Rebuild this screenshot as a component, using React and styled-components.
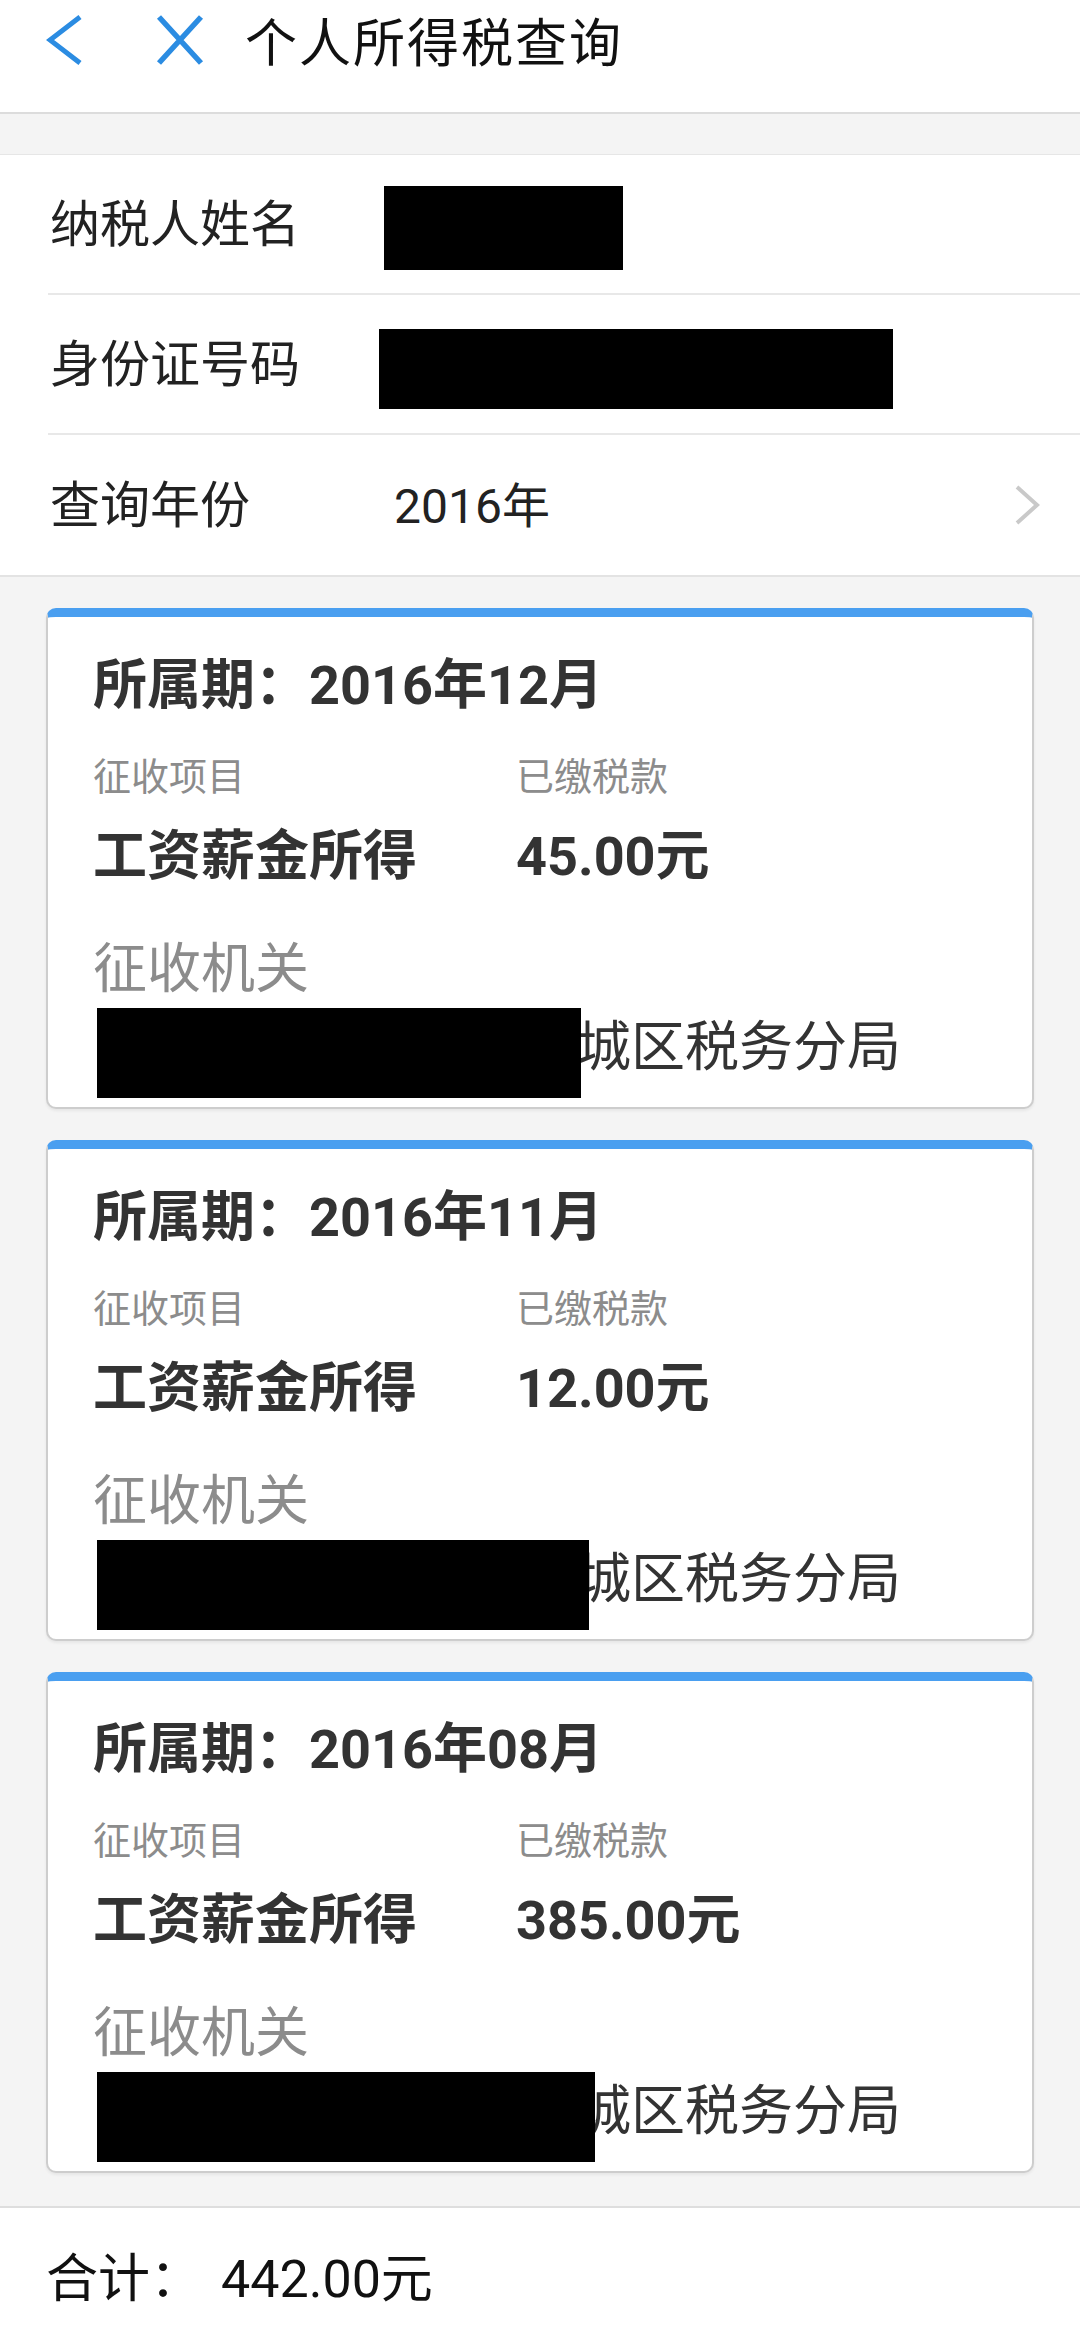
import React from 'react';
import styled, { createGlobalStyle } from 'styled-components';

const records = [
  { period: '2016年12月', item: '工资薪金所得', amount: '45.00元', extra: 0 },
  { period: '2016年11月', item: '工资薪金所得', amount: '12.00元', extra: 8 },
  { period: '2016年08月', item: '工资薪金所得', amount: '385.00元', extra: 14 },
];

const GlobalStyle = createGlobalStyle`
  html, body {
    margin: 0;
    padding: 0;
    background: #ffffff;
  }
  body {
    font-family: Roboto, "Noto Sans CJK SC", sans-serif;
    color: #222;
  }
  *, *::before, *::after {
    box-sizing: border-box;
  }
`;

const Page = styled.div`
  width: 1080px;
  min-height: 2350px;
  display: flex;
  flex-direction: column;
  background: #fff;
`;

const Header = styled.header`
  height: 114px;
  padding: 14px 0 0 46px;
  display: flex;
  align-items: flex-start;
  border-bottom: 2px solid #dcdcdc;
`;

const HeaderRow = styled.div`
  height: 52px;
  display: flex;
  align-items: center;
`;

const IconButton = styled.svg`
  display: block;
  margin-right: ${(p) => p.$gap}px;
  flex-shrink: 0;
`;

const Title = styled.h1`
  margin: 0;
  font-family: "Noto Sans CJK SC", sans-serif;
  font-weight: 400;
  font-size: 52px;
  line-height: 1;
  letter-spacing: 2px;
  color: #111;
`;

const Spacer = styled.div`
  height: 41px;
  background: #f4f4f4;
  border-bottom: 1px solid #e6e6e6;
`;

const Form = styled.section`
  border-bottom: 2px solid #e3e3e3;
`;

const Row = styled.div`
  height: 140px;
  margin-left: 48px;
  padding-right: 40px;
  display: flex;
  align-items: center;
  border-bottom: ${(p) => (p.$last ? 'none' : '2px solid #e8e8e8')};
`;

const Label = styled.span`
  width: 336px;
  flex-shrink: 0;
  font-family: "Noto Sans CJK SC", sans-serif;
  font-size: 50px;
  color: #222;
  padding-left: 2px;
  padding-bottom: 8px;
`;

const Value = styled.span`
  flex: 1;
  font-size: 48px;
  color: #222;
  padding-left: 10px;
  padding-bottom: 6px;
`;

const Redacted = styled.div`
  background: #000;
  width: ${(p) => p.$w}px;
  height: ${(p) => p.$h}px;
  margin-left: ${(p) => p.$ml || 0}px;
  margin-top: ${(p) => p.$mt || 0}px;
  margin-right: ${(p) => p.$mr || 0}px;
  flex-shrink: 0;
  position: relative;
  z-index: 1;
`;

const List = styled.section`
  background: #f4f4f4;
  padding: 31px 46px 33px;
  display: flex;
  flex-direction: column;
  gap: 31px;
  border-bottom: 2px solid #dedede;
`;

const Card = styled.article`
  background: #fff;
  border: 2px solid #cdcdcd;
  border-top: 9px solid #4a9ff0;
  border-radius: 10px;
  padding: 38px 44px 9px 45px;
  box-shadow: 0 2px 3px rgba(0, 0, 0, 0.06);
`;

const Period = styled.div`
  font-size: 54px;
  font-weight: 700;
  line-height: 62px;
  color: #333;
`;

const Grid = styled.div`
  display: grid;
  grid-template-columns: 423px 1fr;
  margin-top: ${(p) => p.$mt}px;
`;

const SmallLabel = styled.div`
  font-family: "Noto Sans CJK SC", sans-serif;
  font-size: 38px;
  line-height: 46px;
  color: #8c8c8c;
`;

const BigValue = styled.div`
  font-size: 54px;
  font-weight: 700;
  line-height: 62px;
  color: #333;
`;

const AgencyLabel = styled.div`
  margin-top: 46px;
  font-family: "Noto Sans CJK SC", sans-serif;
  font-size: 54px;
  line-height: 62px;
  color: #8c8c8c;
`;

const Address = styled.div`
  margin-top: 12px;
  display: flex;
  align-items: flex-start;
`;

const AddressText = styled.span`
  font-family: "Noto Sans CJK SC", sans-serif;
  font-size: 54px;
  line-height: 62px;
  margin-top: 4px;
  color: #333;
`;

const Footer = styled.footer`
  height: 132px;
  padding-left: 46px;
  display: flex;
  align-items: center;
  font-size: 52px;
  color: #111;
`;

const FooterLabel = styled.span`
  font-family: "Noto Sans CJK SC", sans-serif;
  margin-right: 19px;
`;

const BackIcon = () => (
  <IconButton width="38" height="52" viewBox="0 0 38 52" $gap={71}>
    <polyline points="34,3 4,26 34,49" fill="none" stroke="#2b8ce2" strokeWidth="5" />
  </IconButton>
);

const CloseIcon = () => (
  <IconButton width="50" height="52" viewBox="0 0 50 52" $gap={40}>
    <path d="M4 3 L46 49 M46 3 L4 49" fill="none" stroke="#2b8ce2" strokeWidth="5.5" />
  </IconButton>
);

const ChevronRight = () => (
  <svg width="26" height="42" viewBox="0 0 26 42">
    <polyline points="3,3 23,21 3,39" fill="none" stroke="#c9c9c9" strokeWidth="4" />
  </svg>
);

const TaxCard = ({ period, item, amount, extra }) => (
  <Card>
    <Period>所属期：{period}</Period>
    <Grid $mt={34}>
      <SmallLabel>征收项目</SmallLabel>
      <SmallLabel>已缴税款</SmallLabel>
    </Grid>
    <Grid $mt={29}>
      <BigValue>{item}</BigValue>
      <BigValue>{amount}</BigValue>
    </Grid>
    <AgencyLabel>征收机关</AgencyLabel>
    <Address>
      <Redacted $w={484 + extra} $h={90} $ml={4} $mr={-extra - 4} />
      <AddressText>城区税务分局</AddressText>
    </Address>
  </Card>
);

export default function App() {
  return (
    <Page>
      <GlobalStyle />
      <Header>
        <HeaderRow>
          <BackIcon />
          <CloseIcon />
          <Title>个人所得税查询</Title>
        </HeaderRow>
      </Header>
      <Spacer />
      <Form>
        <Row>
          <Label>纳税人姓名</Label>
          <Redacted $w={239} $h={84} $mt={8} />
        </Row>
        <Row>
          <Label>身份证号码</Label>
          <Redacted $w={514} $h={80} $ml={-5} $mt={10} />
        </Row>
        <Row $last>
          <Label>查询年份</Label>
          <Value>2016年</Value>
          <ChevronRight />
        </Row>
      </Form>
      <List>
        {records.map((r) => (
          <TaxCard key={r.period} {...r} />
        ))}
      </List>
      <Footer>
        <FooterLabel>合计：</FooterLabel>
        <span>442.00元</span>
      </Footer>
    </Page>
  );
}
